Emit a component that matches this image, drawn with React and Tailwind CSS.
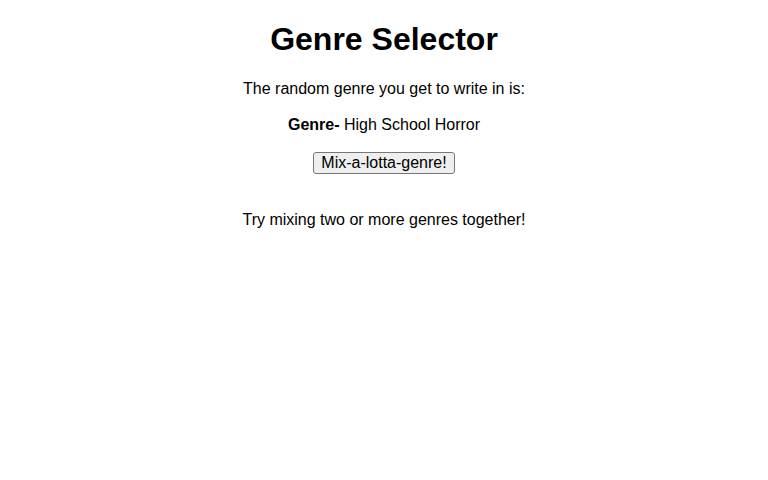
import { useState } from 'react'

const GENRES = [
  'High School Horror',
  'Space Western',
  'Cozy Mystery',
  'Cyberpunk Romance',
  'Historical Fantasy',
  'Post-Apocalyptic Comedy',
]

export default function App() {
  const [genre, setGenre] = useState(GENRES[0])

  function mix() {
    const next = GENRES[Math.floor(Math.random() * GENRES.length)]
    setGenre(next)
  }

  return (
    <div className="min-h-screen bg-white text-center text-black font-['Liberation_Sans',Arial,sans-serif]">
      <div className="pt-[21px]">
        <h1 className="text-[32px] font-bold leading-[37px]">Genre Selector</h1>
        <p className="mt-[22px] text-base leading-[18px]">The random genre you get to write in is:</p>
        <p className="mt-[18px] text-base leading-[18px]">
          <b>Genre-</b> {genre}
        </p>
        <div className="mt-[17px]">
          <button
            onClick={mix}
            className="rounded-[3px] border border-[#767676] bg-[#efefef] px-[7px] py-[1px] text-base leading-[18px] hover:bg-[#e5e5e5]"
          >
            Mix-a-lotta-genre!
          </button>
        </div>
        <p className="mt-[36px] text-base leading-[18px]">Try mixing two or more genres together!</p>
      </div>
    </div>
  )
}
